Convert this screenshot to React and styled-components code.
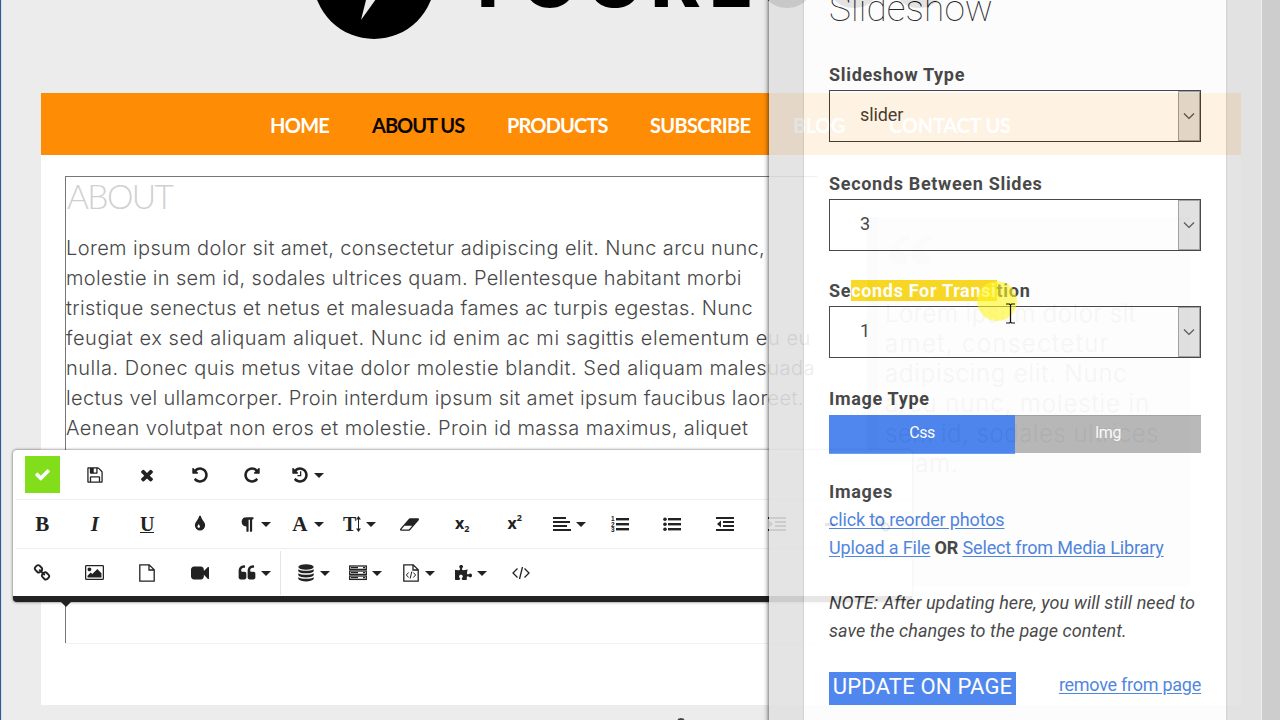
import React from 'react'
import styled, { createGlobalStyle, css } from 'styled-components'
import { FaPuzzlePiece } from 'react-icons/fa'

const GlobalStyle = createGlobalStyle`
  * {
    box-sizing: border-box;
  }

  body {
    margin: 0;
    overflow: hidden;
    font-family: Roboto, sans-serif;
  }
`

const Screen = styled.div`
  position: relative;
  width: 1280px;
  height: 720px;
  overflow: hidden;
  background: #ececec;
  border-left: 1px solid #35588c;
  box-shadow: inset 1px 0 0 #cfe0f5;
`

const Site = styled.div`
  width: 1200px;
  margin-left: 40px;
`

const Header = styled.header`
  display: flex;
  align-items: flex-start;
  height: 93px;
  padding-left: 272px;
`

const LogoMark = styled.svg`
  flex: none;
  width: 122px;
  height: 122px;
  margin-top: -83px;
`

const LogoText = styled.div`
  margin: -66px 0 0 24px;
  font: 800 76px/90px Inter, sans-serif;
  letter-spacing: 8px;
  color: #000;
`

const Nav = styled.nav`
  display: flex;
  align-items: center;
  gap: 43px;
  height: 62px;
  padding: 2px 0 0 229px;
  background: #fe8c05;
`

const NavLink = styled.a`
  width: ${p => p.$width}px;
  font: 700 20px/24px Lato, sans-serif;
  letter-spacing: ${p => p.$spacing}px;
  white-space: nowrap;
  color: ${p => (p.$active ? '#0d0600' : '#fff')};
`

const Content = styled.main`
  display: flex;
  justify-content: space-between;
  align-items: flex-start;
  height: 550px;
  padding: 21px 51px 0 24px;
  background: #fff;
`

const Editable = styled.section`
  width: 752px;
  height: 467px;
  border: solid #777;
  border-width: 1px 0 0 1px;
  box-shadow: 0 1px 0 #f2f2f2;
`

const Heading = styled.h1`
  margin: 0 0 18px 1px;
  font: 300 33.5px/38px Lato, sans-serif;
  letter-spacing: -1.6px;
  color: #d0d0d0;
`

const Line = styled.div`
  font: 300 20px/30px Inter, sans-serif;
  letter-spacing: ${p => p.$spacing}px;
  white-space: nowrap;
  color: #484848;
`

const Quote = styled.blockquote`
  width: 323px;
  height: 370px;
  margin: 41px 0 0;
  padding: 15px 0 0 7px;
  background: #ededed;
  border-left: 11px solid #ddd;
`

const QuoteMark = styled.div`
  height: 67px;
  font: 700 100px/72px 'Liberation Serif', serif;
  color: #ddd;
`

const QuoteLine = styled.div`
  font: 300 24px/30px Inter, sans-serif;
  letter-spacing: ${p => p.$spacing}px;
  white-space: nowrap;
  color: #a4a4a4;
`

const FooterMark = styled.div`
  width: 8px;
  height: 8px;
  margin: 13px 0 0 636px;
  border: 2px solid #444;
  border-radius: 50%;
`

/* floating editor toolbar */

const Toolbar = styled.div`
  position: absolute;
  top: 450px;
  left: 12px;
  width: 899px;
  height: 152px;
  padding-left: 3px;
  background: #fff;
  border-bottom: 6px solid #222;
  border-radius: 4px;
  box-shadow: 0 0 3px rgba(0, 0, 0, 0.65);

  &::after {
    content: '';
    position: absolute;
    top: 151px;
    left: 47px;
    border: solid transparent;
    border-width: 6px 6px 0;
    border-top-color: #222;
  }
`

const ToolRow = styled.div`
  display: flex;
  align-items: center;
  height: ${p => p.$height || 49}px;
  border-bottom: ${p => (p.$last ? 0 : 1)}px solid #eee;
`

const Tool = styled.button`
  position: relative;
  display: flex;
  align-items: center;
  justify-content: center;
  flex: none;
  width: 52.5px;
  height: 38px;
  padding: 0;
  border: 0;
  background: none;
  color: #222;

  ${p =>
    p.$menu &&
    css`
      padding-right: 10px;

      &::after {
        content: '';
        position: absolute;
        top: 17px;
        right: 7.5px;
        border: solid transparent;
        border-width: 5px 5px 0;
        border-top-color: #222;
      }
    `}
`

const Confirm = styled.span`
  display: flex;
  align-items: center;
  justify-content: center;
  width: 35px;
  height: 37px;
  background: #82de1a;
  color: #fff;
`

const Glyph = styled.span`
  font: ${p => p.$weight || 700} ${p => p.$size || 21}px/24px 'Liberation Serif', serif;
  font-style: ${p => (p.$italic ? 'italic' : 'normal')};
  border-bottom: ${p => (p.$under ? '1.5px solid #222' : '0')};
  line-height: ${p => (p.$under ? 16 : 24)}px;
`

const Script = styled.span`
  font: 700 16px/20px 'Open Sans', sans-serif;

  small {
    font-size: 9px;
    position: relative;
    top: ${p => (p.$up ? -8 : 3)}px;
  }
`

const Divider = styled.i`
  width: 1px;
  height: 44px;
  margin: 0 4px 0 1px;
  background: #e4e4e4;
`

const paths = {
  check:
    'M1671 566q0 40-28 68l-724 724-136 136q-28 28-68 28t-68-28l-136-136-362-362q-28-28-28-68t28-68l136-136q28-28 68-28t68 28l294 295 656-657q28-28 68-28t68 28l136 136q28 28 28 68z',
  save:
    'M512 1536h768v-384h-768v384zm896 0h128v-896q0-14-10-38.5t-20-34.5l-281-281q-10-10-34-20t-39-10v416q0 40-28 68t-68 28h-576q-40 0-68-28t-28-68v-416h-128v1280h128v-416q0-40 28-68t68-28h832q40 0 68 28t28 68v416zm-384-928v-320q0-13-9.5-22.5t-22.5-9.5h-192q-13 0-22.5 9.5t-9.5 22.5v320q0 13 9.5 22.5t22.5 9.5h192q13 0 22.5-9.5t9.5-22.5zm640 32v928q0 40-28 68t-68 28h-1344q-40 0-68-28t-28-68v-1344q0-40 28-68t68-28h928q40 0 88 20t76 48l280 280q28 28 48 76t20 88z',
  close:
    'M1490 1322q0 40-28 68l-136 136q-28 28-68 28t-68-28l-294-294-294 294q-28 28-68 28t-68-28l-136-136q-28-28-28-68t28-68l294-294-294-294q-28-28-28-68t28-68l136-136q28-28 68-28t68 28l294 294 294-294q28-28 68-28t68 28l136 136q28 28 28 68t-28 68l-294 294 294 294q28 28 28 68z',
  undo:
    'M1664 896q0 156-61 298t-164 245-245 164-298 61q-172 0-327-72.5t-264-204.5q-7-10-6.5-22.5t8.5-20.5l137-138q10-9 25-9 16 2 23 12 73 95 179 147t225 52q104 0 198.5-40.5t163.5-109.5 109.5-163.5 40.5-198.5-40.5-198.5-109.5-163.5-163.5-109.5-198.5-40.5q-98 0-188 35.5t-160 101.5l137 138q31 30 14 69-17 40-59 40h-448q-26 0-45-19t-19-45v-448q0-42 40-59 39-17 69 14l130 129q107-101 244.5-156.5t284.5-55.5q156 0 298 61t245 164 164 245 61 298z',
  redo:
    'M1664 256v448q0 26-19 45t-45 19h-448q-42 0-59-40-17-39 14-69l138-138q-148-137-349-137-104 0-198.5 40.5t-163.5 109.5-109.5 163.5-40.5 198.5 40.5 198.5 109.5 163.5 163.5 109.5 198.5 40.5q119 0 225-52t179-147q7-10 23-12 15 0 25 9l137 138q9 8 9.5 20.5t-7.5 22.5q-109 132-264 204.5t-327 72.5q-156 0-298-61t-245-164-164-245-61-298 61-298 164-245 245-164 298-61q147 0 284.5 55.5t244.5 156.5l130-129q29-31 70-14 39 17 39 59z',
  tint:
    'M896 1152q0-36-20-69-1-1-15.5-22.5t-25.5-38-25-44-21-50.5q-4-16-21-16t-21 16q-7 23-21 50.5t-25 44-25.5 38-15.5 22.5q-20 33-20 69 0 53 37.5 90.5t90.5 37.5 90.5-37.5 37.5-90.5zm512-128q0 212-150 362t-362 150-362-150-150-362q0-145 81-275 6-9 62.5-90.5t101-151 99.5-178 83-201.5q9-30 34-47t51-17 51.5 17 33.5 47q28 93 83 201.5t99.5 178 101 151 62.5 90.5q81 127 81 275z',
  paragraph:
    'M1534 189v73q0 29-18.5 61t-42.5 32q-50 0-54 1-26 6-32 31-3 11-3 64v1152q0 25-18 43t-43 18h-108q-25 0-43-18t-18-43v-1218h-143v1218q0 25-17.5 43t-43.5 18h-108q-26 0-43.5-18t-17.5-43v-496q-147-12-245-59-126-58-192-179-64-117-64-259 0-166 88-286 88-118 209-159 111-37 417-37h479q25 0 43 18t18 43z',
  eraser:
    'M832 1408l336-384h-768l-336 384h768zm1013-1077q15 34 9.5 71.5t-30.5 65.5l-896 1024q-38 44-96 44h-768q-38 0-69.5-20.5t-47.5-54.5q-15-34-9.5-71.5t30.5-65.5l896-1024q38-44 96-44h768q38 0 69.5 20.5t47.5 54.5z',
  link:
    'M1520 1216q0-40-28-68l-208-208q-28-28-68-28-42 0-72 32 3 3 19 18.5t21.5 21.5 15 19 13 25.5 3.5 27.5q0 40-28 68t-68 28q-15 0-27.5-3.5t-25.5-13-19-15-21.5-21.5-18.5-19q-33 31-33 73 0 40 28 68l206 207q27 27 68 27 40 0 68-26l147-146q28-28 28-67zm-703-705q0-40-28-68l-206-207q-28-28-68-28-39 0-68 27l-147 146q-28 28-28 67 0 40 28 68l208 208q27 27 68 27 42 0 72-31-3-3-19-18.5t-21.5-21.5-15-19-13-25.5-3.5-27.5q0-40 28-68t68-28q15 0 27.5 3.5t25.5 13 19 15 21.5 21.5 18.5 19q33-31 33-73zm895 705q0 120-85 203l-147 146q-83 83-203 83-121 0-204-85l-206-207q-83-83-83-203 0-123 88-209l-88-88q-86 88-208 88-120 0-204-84l-208-208q-84-84-84-204t85-203l147-146q83-83 203-83 121 0 204 85l206 207q83 83 83 203 0 123-88 209l88 88q86-88 208-88 120 0 204 84l208 208q84 84 84 204z',
  image:
    'M576 576q0 80-56 136t-136 56-136-56-56-136 56-136 136-56 136 56 56 136zm1024 384v448h-1408v-192l320-320 160 160 512-512zm96-704h-1600q-13 0-22.5 9.5t-9.5 22.5v1216q0 13 9.5 22.5t22.5 9.5h1600q13 0 22.5-9.5t9.5-22.5v-1216q0-13-9.5-22.5t-22.5-9.5zm160 32v1216q0 66-47 113t-113 47h-1600q-66 0-113-47t-47-113v-1216q0-66 47-113t113-47h1600q66 0 113 47t47 113z',
  video:
    'M1792 352v1088q0 42-39 59-13 5-25 5-27 0-45-19l-403-403v166q0 119-84.5 203.5t-203.5 84.5h-704q-119 0-203.5-84.5t-84.5-203.5v-704q0-119 84.5-203.5t203.5-84.5h704q119 0 203.5 84.5t84.5 203.5v165l403-402q18-19 45-19 12 0 25 5 39 17 39 59z',
  quote:
    'M832 960v384q0 80-56 136t-136 56h-384q-80 0-136-56t-56-136v-704q0-104 40.5-198.5t109.5-163.5 163.5-109.5 198.5-40.5h64q26 0 45 19t19 45v128q0 26-19 45t-45 19h-64q-106 0-181 75t-75 181v32q0 40 28 68t68 28h224q80 0 136 56t56 136zm896 0v384q0 80-56 136t-136 56h-384q-80 0-136-56t-56-136v-704q0-104 40.5-198.5t109.5-163.5 163.5-109.5 198.5-40.5h64q26 0 45 19t19 45v128q0 26-19 45t-45 19h-64q-106 0-181 75t-75 181v32q0 40 28 68t68 28h224q80 0 136 56t56 136z',
}
paths.history = paths.undo + 'M1024 544v448q0 14-9 23t-23 9h-320q-14 0-23-9t-9-23v-64q0-14 9-23t23-9h224v-352q0-14 9-23t23-9h64q14 0 23 9t9 23z'

const Fa = ({ name, size = 18, box = '0 0 1792 1792' }) => (
  <svg width={size} height={size} viewBox={box} fill="currentColor">
    <path d={paths[name]} />
  </svg>
)

const Bars = ({ rows, children }) => (
  <svg width="18" height="16" viewBox="0 0 18 16" fill="currentColor">
    {rows.map(([x, width], i) => (
      <rect key={i} x={x} y={1 + i * 4} width={width} height="2" />
    ))}
    {children}
  </svg>
)

const List = ({ children }) => (
  <svg width="18" height="18" viewBox="0 0 18 18" fill="currentColor">
    {[3, 8, 13].map(y => (
      <rect key={y} x="5" y={y} width="13" height="2.4" />
    ))}
    {children}
  </svg>
)

const Ordered = () => (
  <List>
    <g fontFamily="Liberation Sans" fontSize="6.5" fontWeight="700">
      <text x="0" y="6">1</text>
      <text x="0" y="11.5">2</text>
      <text x="0" y="17">3</text>
    </g>
  </List>
)

const Bullets = () => (
  <List>
    <circle cx="2" cy="4.2" r="1.8" />
    <circle cx="2" cy="9.2" r="1.8" />
    <circle cx="2" cy="14.2" r="1.8" />
  </List>
)

const indentRows = [[0, 18], [7, 11], [7, 11], [0, 18]]

const Outdent = () => (
  <Bars rows={indentRows}>
    <path d="M5 4.5v7L1 8z" />
  </Bars>
)

const Indent = () => (
  <Bars rows={indentRows}>
    <path d="M1 4.5v7L5 8z" />
  </Bars>
)

const FileIcon = ({ code }) => (
  <svg width="16" height="18" viewBox="0 0 16 18" fill="none" stroke="currentColor" strokeWidth="1.3">
    <path d="M.8.8h9.4l5 5v11.4H.8zM10 .8V6h5.2" />
    {code && <path d="M5.6 8.5 3.4 11l2.2 2.5M10.4 8.5l2.2 2.5-2.2 2.5M8.8 7.5l-1.6 7" strokeWidth="1" />}
  </svg>
)

const Database = () => (
  <svg width="16" height="18" viewBox="0 0 16 18" fill="currentColor">
    <ellipse cx="8" cy="3" rx="7.7" ry="2.8" />
    <path d="M.3 5.2c3 2.2 12.4 2.2 15.4 0v2c-2 2.9-13.4 2.9-15.4 0zM.3 9.2c3 2.2 12.4 2.2 15.4 0v2c-2 2.9-13.4 2.9-15.4 0zM.3 13.2c3 2.2 12.4 2.2 15.4 0V15c-2 3.3-13.4 3.3-15.4 0z" />
  </svg>
)

const Server = () => (
  <svg width="18" height="16" viewBox="0 0 18 16" fill="none" stroke="currentColor" strokeWidth="1.3">
    {[1, 6, 11].map(y => (
      <g key={y}>
        <rect x=".7" y={y} width="16.6" height="3.4" />
        <path d={`M2 ${y + 1.7}h7M14 ${y + 1.7}h2`} />
      </g>
    ))}
  </svg>
)

const Code = () => (
  <svg width="18" height="14" viewBox="0 0 18 14" fill="none" stroke="currentColor" strokeWidth="1.3">
    <path d="M5.5 2.5 1 7l4.500 4.500M12.500 2.500 17 7l-4.500 4.500M10.500 1l-3 12" />
  </svg>
)

const TextSize = () => (
  <svg width="5" height="16" viewBox="0 0 5 16" fill="currentColor">
    <path d="M2.500 0 5 3.500H3v9h2L2.500 16 0 12.500h2v-9H0z" />
  </svg>
)

/* settings panel */

const Panel = styled.aside`
  position: absolute;
  top: -20px;
  left: 768px;
  display: flex;
  width: 512px;
  height: 760px;
  padding: 0 0 0 35px;
  background: #e1e1e1;
  box-shadow: 0 0 5px rgba(0, 0, 0, 0.9);
  opacity: 0.89;
`

const Card = styled.div`
  display: flex;
  flex-direction: column;
  width: 422px;
  padding: 6px 25px 0;
  background: #fff;
  box-shadow: 0 0 2px rgba(0, 0, 0, 0.2);
`

const ScrollTrack = styled.div`
  width: 20px;
  margin-left: auto;
  background: #cacaca;
  border-left: 1px solid #efefef;
`

const Title = styled.h2`
  margin: 1px 0 30px;
  font: 100 37px/44px Roboto, sans-serif;
  letter-spacing: 0.1px;
  color: #111;
`

const Field = styled.div`
  margin-bottom: ${p => p.$gap}px;
`

const Label = styled.div`
  font: 700 18px/28px Roboto, sans-serif;
  letter-spacing: 0.68px;
  white-space: nowrap;
  color: #333;
`

const Select = styled.div`
  display: flex;
  align-items: center;
  justify-content: space-between;
  height: 52px;
  margin-top: 1px;
  padding-left: 30px;
  border: 1px solid #333;
  font-size: 18px;
  letter-spacing: -0.1px;
  color: #333;
`

const SelectValue = styled.span`
  padding-bottom: 3px;
`

const Arrow = styled.span`
  display: flex;
  align-items: center;
  justify-content: center;
  width: 22px;
  height: 50px;
  background: #dedede;
  border: 1px solid #999;
`

const Highlight = styled.mark`
  background: #f9d50c;
  color: #fff;
`

const Toggle = styled.div`
  display: flex;
  height: 38px;
  margin-top: 2px;
`

const ToggleOption = styled.button`
  flex: 1;
  padding: 0 0 3px;
  border: 0;
  background: ${p => (p.$on ? '#3b79ec' : '#b1b1b1')};
  box-shadow: ${p => (p.$on ? '0 1px 0 #5f93f2' : 'inset 0 1px 0 #999')};
  font: 400 16px/20px Roboto, sans-serif;
  letter-spacing: -0.4px;
  color: #fff;
`

const Links = styled.div`
  font-size: 18px;
  line-height: 28px;
  letter-spacing: -0.16px;
  white-space: nowrap;
  color: #333;
`

const Link = styled.a`
  color: #3c78dc;
  text-decoration: underline;
  text-underline-offset: 2px;
`

const Note = styled.p`
  margin: 27px 0 28px;
  font: italic 400 18px/27.5px Roboto, sans-serif;
  letter-spacing: 0.07px;
  white-space: nowrap;
  color: #333;
`

const Actions = styled.div`
  display: flex;
  align-items: flex-start;
  justify-content: space-between;
  font-size: 18px;
  line-height: 26px;
  letter-spacing: -0.26px;
`

const UpdateButton = styled.button`
  width: 187px;
  height: 33px;
  padding: 0 0 3px;
  border: 0;
  background: #3b79ec;
  font: 400 22px/30px Roboto, sans-serif;
  letter-spacing: 0.2px;
  white-space: nowrap;
  color: #fff;
`

const ClickHalo = styled.div`
  position: absolute;
  top: 281px;
  left: 976px;
  width: 40px;
  height: 40px;
  border-radius: 50%;
  background: radial-gradient(rgba(255, 246, 30, 0.6) 60%, rgba(255, 246, 60, 0.4));
`

const Cursor = styled.svg`
  position: absolute;
  top: 303px;
  left: 1004px;
`

const navItems = [
  ['HOME', 59, -0.7],
  ['ABOUT US', 92, -1],
  ['PRODUCTS', 100, -0.85],
  ['SUBSCRIBE', 100, -0.7],
  ['BLOG', 53, -0.5],
  ['CONTACT US', 123, -0.2],
]

const lines = [
  ['Lorem ipsum dolor sit amet, consectetur adipiscing elit. Nunc arcu nunc,', 0.38],
  ['molestie in sem id, sodales ultrices quam. Pellentesque habitant morbi', 0.34],
  ['tristique senectus et netus et malesuada fames ac turpis egestas. Nunc', 0.353],
  ['feugiat ex sed aliquam aliquet. Nunc id enim ac mi sagittis elementum eu eu', 0.55],
  ['nulla. Donec quis metus vitae dolor molestie blandit. Sed aliquam malesuada', 0.52],
  ['lectus vel ullamcorper. Proin interdum ipsum sit amet ipsum faucibus laoreet.', 0.34],
  ['Aenean volutpat non eros et molestie. Proin id massa maximus, aliquet', 0.41],
]

const quoteLines = [
  ['Lorem ipsum dolor sit', 0.5],
  ['amet, consectetur', 1.4],
  ['adipiscing elit. Nunc', 0.8],
  ['arcu nunc, molestie in', 0.9],
  ['sem id, sodales ultrices', 0.5],
  ['quam.', 0.8],
]

function SelectField({ label, value, gap }) {
  return (
    <Field $gap={gap}>
      <Label>{label}</Label>
      <Select>
        <SelectValue>{value}</SelectValue>
        <Arrow>
          <svg width="12" height="8" viewBox="0 0 12 8" fill="none" stroke="#444" strokeWidth="1.2">
            <path d="M1 1.5l5 5 5-5" />
          </svg>
        </Arrow>
      </Select>
    </Field>
  )
}

function EditorToolbar() {
  return (
    <Toolbar>
      <ToolRow $height={50}>
        <Tool><Confirm><Fa name="check" size={17} /></Confirm></Tool>
        <Tool><Fa name="save" /></Tool>
        <Tool><Fa name="close" /></Tool>
        <Tool><Fa name="undo" /></Tool>
        <Tool><Fa name="redo" /></Tool>
        <Tool $menu><Fa name="history" /></Tool>
      </ToolRow>
      <ToolRow>
        <Tool><Glyph>B</Glyph></Tool>
        <Tool><Glyph $italic>I</Glyph></Tool>
        <Tool><Glyph $under $size={20}>U</Glyph></Tool>
        <Tool><Fa name="tint" /></Tool>
        <Tool $menu><Fa name="paragraph" size={17} /></Tool>
        <Tool $menu><Glyph>A</Glyph></Tool>
        <Tool $menu><Glyph $size={20}>T</Glyph><TextSize /></Tool>
        <Tool><Fa name="eraser" size={19} box="-64 0 1920 1792" /></Tool>
        <Tool><Script>x<small>2</small></Script></Tool>
        <Tool><Script $up>x<small>2</small></Script></Tool>
        <Tool $menu><Bars rows={[[0, 13], [0, 17], [0, 14], [0, 18]]} /></Tool>
        <Tool><Ordered /></Tool>
        <Tool><Bullets /></Tool>
        <Tool><Outdent /></Tool>
        <Tool><Indent /></Tool>
        <Tool>
          <svg width="10" height="3"><rect width="10" height="3" fill="currentColor" /></svg>
        </Tool>
        <Tool><Fa name="link" /></Tool>
      </ToolRow>
      <ToolRow $last $height={47}>
        <Tool><Fa name="link" /></Tool>
        <Tool><Fa name="image" size={19} box="-64 0 1920 1792" /></Tool>
        <Tool><FileIcon /></Tool>
        <Tool><Fa name="video" /></Tool>
        <Tool $menu><Fa name="quote" /></Tool>
        <Divider />
        <Tool $menu><Database /></Tool>
        <Tool $menu><Server /></Tool>
        <Tool $menu><FileIcon code /></Tool>
        <Tool $menu><FaPuzzlePiece size={17} /></Tool>
        <Tool><Code /></Tool>
      </ToolRow>
    </Toolbar>
  )
}

function App() {
  return (
    <Screen>
      <GlobalStyle />
      <Site>
        <Header>
          <LogoMark viewBox="0 0 122 122">
            <circle cx="61" cy="61" r="61" fill="#000" />
            <path d="M58 50h28L48 103l9-36H42z" fill="#ececec" />
          </LogoMark>
          <LogoText>YOURLOGO</LogoText>
        </Header>
        <Nav>
          {navItems.map(([text, width, spacing]) => (
            <NavLink key={text} $width={width} $spacing={spacing} $active={text === 'ABOUT US'}>
              {text}
            </NavLink>
          ))}
        </Nav>
        <Content>
          <Editable>
            <Heading>ABOUT</Heading>
            {lines.map(([text, spacing]) => (
              <Line key={text} $spacing={spacing}>{text}</Line>
            ))}
          </Editable>
          <Quote>
            <QuoteMark>“</QuoteMark>
            {quoteLines.map(([text, spacing]) => (
              <QuoteLine key={text} $spacing={spacing}>{text}</QuoteLine>
            ))}
          </Quote>
        </Content>
        <FooterMark />
      </Site>
      <EditorToolbar />
      <Panel>
        <Card>
          <Title>Slideshow</Title>
          <SelectField label="Slideshow Type" value="slider" gap={28} />
          <SelectField label="Seconds Between Slides" value="3" gap={26} />
          <SelectField
            label={<>Se<Highlight>conds For Transi</Highlight>tion</>}
            value="1"
            gap={27}
          />
          <Field $gap={25}>
            <Label>Image Type</Label>
            <Toggle>
              <ToggleOption $on>Css</ToggleOption>
              <ToggleOption>Img</ToggleOption>
            </Toggle>
          </Field>
          <Label>Images</Label>
          <Links>
            <Link>click to reorder photos</Link>
            <br />
            <Link>Upload a File</Link> <b>OR</b> <Link>Select from Media Library</Link>
          </Links>
          <Note>
            NOTE: After updating here, you will still need to
            <br />
            save the changes to the page content.
          </Note>
          <Actions>
            <UpdateButton>UPDATE ON PAGE</UpdateButton>
            <Link>remove from page</Link>
          </Actions>
        </Card>
        <ScrollTrack />
      </Panel>
      <ClickHalo />
      <Cursor width="11" height="21" viewBox="0 0 11 21" fill="none" stroke="#111" strokeWidth="1.2">
        <path d="M1 1h3.500l1 1 1-1H10M5.500 2v17M1 20h3.500l1-1 1 1H10" />
      </Cursor>
    </Screen>
  )
}

export default App
